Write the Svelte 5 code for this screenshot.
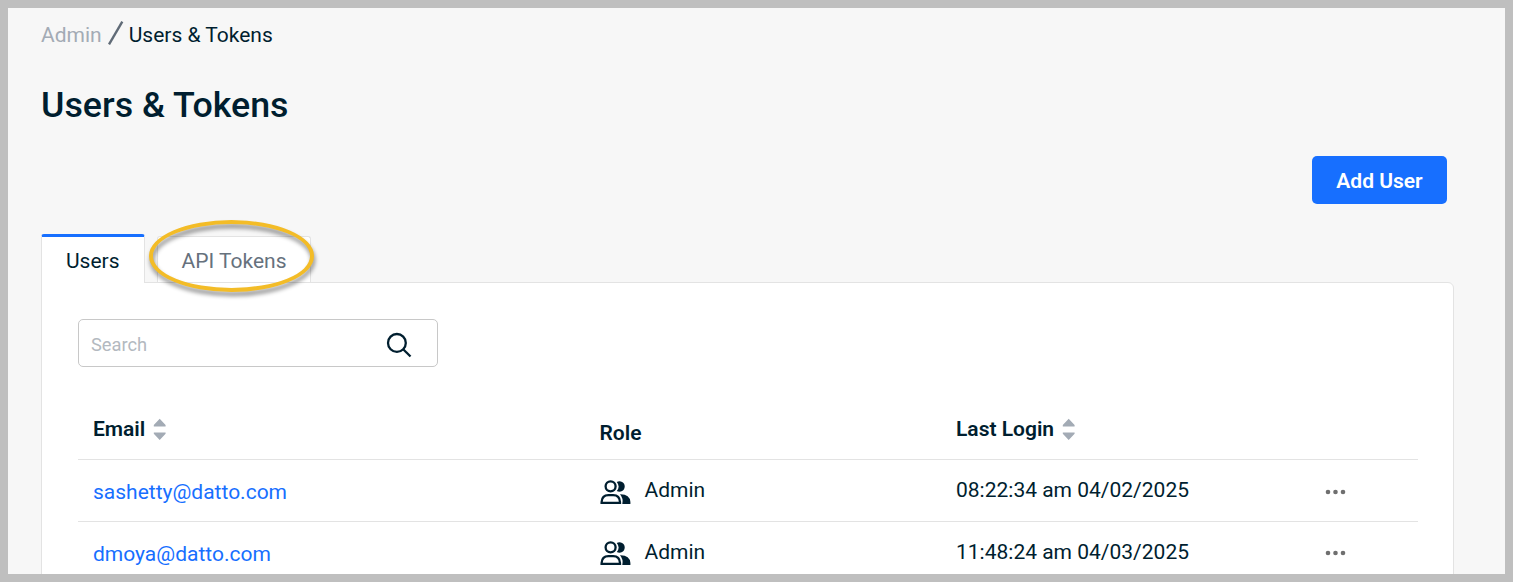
<script lang="ts">
  type User = { email: string; role: string; lastLogin: string };

  const users: User[] = [
    { email: 'sashetty@datto.com', role: 'Admin', lastLogin: '08:22:34 am 04/02/2025' },
    { email: 'dmoya@datto.com', role: 'Admin', lastLogin: '11:48:24 am 04/03/2025' }
  ];

  let activeTab = $state('users');
  let search = $state('');

  const visible = $derived(users.filter((user) => user.email.includes(search)));
</script>

{#snippet sortIcon()}
  <svg class="sort" width="13" height="22" viewBox="0 0 13 22">
    <path d="M6.7 0.8 L12.6 7 V8.4 H0.8 V7 Z M0.8 14.6 H12.6 V15.8 L6.7 21.9 L0.8 15.8 Z" />
  </svg>
{/snippet}

<div class="frame">
  <nav class="breadcrumb">
    <a class="parent" href="#admin">Admin</a>
    <svg width="16" height="26" viewBox="0 0 16 26">
      <path d="M1 24.3 L14.3 1.6" />
    </svg>
    <span>Users &amp; Tokens</span>
  </nav>

  <h1>Users &amp; Tokens</h1>

  <div class="actions">
    <button class="add">Add User</button>
  </div>

  <div class="tabs">
    <button class="tab" class:active={activeTab === 'users'} onclick={() => (activeTab = 'users')}>Users</button>
    <div class="tab-wrap">
      <button class="tab" class:active={activeTab === 'tokens'} onclick={() => (activeTab = 'tokens')}>API Tokens</button>
      <div class="callout"></div>
    </div>
  </div>

  <section class="panel">
    <label class="search">
      <input type="text" placeholder="Search" bind:value={search} />
      <svg width="26" height="26" viewBox="0 0 26 26">
        <circle cx="10.9" cy="10.9" r="8.9" />
        <path d="M17.2 17.2 L24.5 24.5" />
      </svg>
    </label>

    <div class="table">
      <div class="row head">
        <div class="sortable">Email {@render sortIcon()}</div>
        <div class="role-head">Role</div>
        <div class="sortable">Last Login {@render sortIcon()}</div>
        <div></div>
      </div>
      {#each visible as user}
        <div class="row">
          <a class="email" href="mailto:{user.email}">{user.email}</a>
          <div class="role">
            <svg width="31" height="25" viewBox="0 0 31 25">
              <path class="solid" d="M16.8 1.9 A5.3 5.3 0 1 1 16.8 11.1 Q20.5 6.5 16.8 1.9 Z" />
              <path class="solid" d="M20 14.3 Q29.7 14 30.4 22 V24 H22.3 Q23.6 18.5 20 14.3 Z" />
              <circle cx="10.6" cy="6.3" r="5" />
              <path d="M1.6 22.9 V22 Q2 15.2 8.4 15.2 H13.2 Q19.6 15.2 20 22 V22.9 Z" />
            </svg>
            <span>{user.role}</span>
          </div>
          <div class="login">{user.lastLogin}</div>
          <button class="more" aria-label="More actions">
            <svg width="22" height="6" viewBox="0 0 22 6">
              <circle cx="3" cy="3" r="2.3" />
              <circle cx="10.5" cy="3" r="2.3" />
              <circle cx="18" cy="3" r="2.3" />
            </svg>
          </button>
        </div>
      {/each}
    </div>
  </section>
</div>

<style>
  :global(body) {
    margin: 0;
    overflow: hidden;
  }
  .frame {
    box-sizing: border-box;
    width: 100%;
    height: 582px;
    padding: 14px 51px 0 33px;
    border: 8px solid #bfbfbf;
    background: #f7f7f7;
    color: #001e2f;
    font-family: Roboto, sans-serif;
    font-size: 21px;
    overflow: hidden;
  }
  button {
    border: 0;
    font: inherit;
    cursor: pointer;
  }
  svg {
    display: block;
    flex: none;
    fill: none;
    stroke: #001e2f;
  }
  .breadcrumb {
    display: flex;
    align-items: center;
    height: 26px;
  }
  .breadcrumb svg {
    margin: -4px 5px 0 6px;
    stroke: #606b77;
    stroke-width: 2.4;
  }
  .parent {
    color: #a3abb5;
    text-decoration: none;
  }
  h1 {
    margin: 35px 0 0;
    font-size: 35.8px;
    font-weight: 500;
    line-height: 44px;
  }
  .actions {
    display: flex;
    justify-content: flex-end;
    padding: 29px 7px 30px 0;
  }
  .add {
    width: 135px;
    height: 48px;
    padding: 2px 0 0;
    border-radius: 5px;
    background: #176fff;
    color: #fff;
    font-weight: 600;
  }
  .tabs {
    display: flex;
    align-items: flex-end;
    gap: 12px;
    height: 48px;
  }
  .tab {
    box-sizing: border-box;
    display: block;
    height: 46px;
    padding: 2px 23.5px 0 24px;
    border: 1px solid #e3e3e3;
    border-bottom: 0;
    border-radius: 3px 3px 0 0;
    background: #fff;
    color: #66717d;
  }
  .tab.active {
    position: relative;
    height: 49px;
    margin-bottom: -1px;
    padding: 1px 24px 0;
    border-top: 3px solid #176fff;
    color: #001e2f;
  }
  .tab-wrap {
    position: relative;
  }
  .callout {
    position: absolute;
    top: -16px;
    left: -7.5px;
    box-sizing: border-box;
    width: 165px;
    height: 71.5px;
    border: 4px solid #f3bc27;
    border-radius: 50%;
    filter: drop-shadow(1px 4px 2px rgba(0, 0, 0, 0.45));
    pointer-events: none;
  }
  .panel {
    box-sizing: border-box;
    height: 400px;
    padding: 36px 35px 0 36px;
    border: 1px solid #e3e3e3;
    border-radius: 0 6px 0 0;
    background: #fff;
  }
  .search {
    box-sizing: border-box;
    display: flex;
    align-items: center;
    justify-content: space-between;
    width: 360px;
    height: 48px;
    padding: 3px 25px 0 12px;
    border: 1px solid #c8c8c8;
    border-radius: 5px;
  }
  .search input {
    width: 250px;
    padding: 0;
    border: 0;
    outline: none;
    background: transparent;
    color: inherit;
    font: inherit;
    font-size: 18.3px;
  }
  .search input::placeholder {
    color: #b3b9c0;
  }
  .search svg {
    stroke-width: 2.3;
  }
  .table {
    margin-top: 30px;
  }
  .row {
    box-sizing: border-box;
    display: grid;
    grid-template-columns: 506.5px 356.5px 362px 1fr;
    height: 62px;
    padding-left: 15px;
    border-bottom: 1px solid #e3e3e3;
    line-height: 28px;
  }
  .head {
    height: 63px;
    font-weight: 600;
  }
  .sortable {
    display: flex;
    align-items: center;
    gap: 8px;
    height: 28px;
    padding-top: 18px;
  }
  .sort {
    fill: #a3abb5;
    stroke: none;
  }
  .role-head {
    padding-top: 22px;
  }
  .email {
    padding-top: 18px;
    color: #176fff;
    text-decoration: none;
  }
  .role {
    display: flex;
    gap: 14px;
    padding-top: 16px;
  }
  .role svg {
    margin-top: 4px;
    stroke-width: 2.3;
  }
  .role .solid {
    fill: #001e2f;
    stroke: none;
  }
  .login {
    padding-top: 16px;
  }
  .more {
    height: 6px;
    margin-top: 29px;
    padding: 0 0 0 7px;
    background: none;
  }
  .more svg {
    fill: #6f6f6f;
    stroke: none;
  }
  .row:last-child .role svg {
    margin-top: 3px;
  }
  .row:last-child .more {
    margin-top: 28px;
  }
</style>
